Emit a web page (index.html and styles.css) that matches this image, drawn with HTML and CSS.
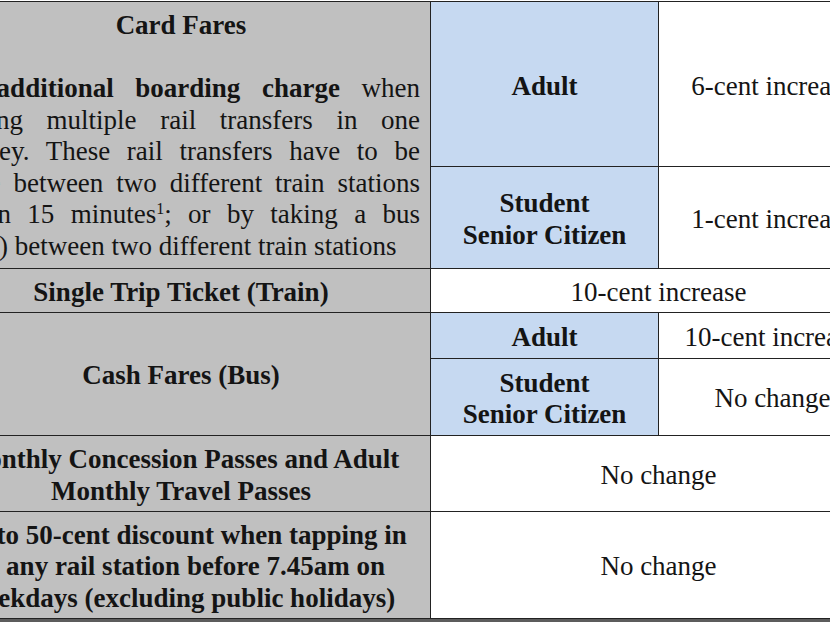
FILE: index.html
```html
<!DOCTYPE html>
<html lang="en">
<head>
<meta charset="utf-8">
<title>Fare changes</title>
<link rel="stylesheet" href="styles.css">
</head>
<body>
<div class="fares">
  <div class="cell head card">
    <div class="card-title">Card Fares</div>
    <div class="para">
      <span class="ln"><b>No additional boarding charge</b> when</span>
      <span class="ln">making multiple rail transfers in one</span>
      <span class="ln">journey. These rail transfers have to be</span>
      <span class="ln">made between two different train stations</span>
      <span class="ln">within 15 minutes<sup>1</sup>; or by taking a bus</span>
      <span class="ln last">trip(s) between two different train stations</span>
    </div>
  </div>
  <div class="cell grp r1">Adult</div>
  <div class="cell val r1">6-cent increase</div>
  <div class="cell grp r2">Student<br>Senior Citizen</div>
  <div class="cell val r2">1-cent increase</div>

  <div class="cell head">Single Trip Ticket (Train)</div>
  <div class="cell val span2">10-cent increase</div>

  <div class="cell head cash">Cash Fares (Bus)</div>
  <div class="cell grp">Adult</div>
  <div class="cell val">10-cent increase</div>
  <div class="cell grp">Student<br>Senior Citizen</div>
  <div class="cell val">No change</div>

  <div class="cell head">Monthly Concession Passes and Adult<br>Monthly Travel Passes</div>
  <div class="cell val span2">No change</div>

  <div class="cell head">Up to 50-cent discount when tapping in<br>at any rail station before 7.45am on<br>weekdays (excluding public holidays)</div>
  <div class="cell val span2">No change</div>
</div>
</body>
</html>
```

FILE: styles.css
```css
html, body {
  margin: 0;
  padding: 0;
  background: #ffffff;
  overflow: hidden;
}

body {
  width: 830px;
  height: 622px;
  font-family: "Liberation Serif", "Times New Roman", serif;
  font-size: 27px;
  line-height: 31.5px;
  color: #141414;
}

.fares {
  display: grid;
  grid-template-columns: 498px 227px 227px;
  grid-template-rows: 164px 101px 43px 45px 76px 75px 106px;
  gap: 1px;
  padding: 1px;
  margin: 1px 0 0 -69px;
  width: max-content;
  background: #222222;
  border-bottom: 3px solid #5c5c5c;
}

.cell {
  display: flex;
  align-items: center;
  justify-content: center;
  text-align: center;
  padding: 4px 0 0 0;
  box-sizing: border-box;
}

.head {
  background: #c0c0c0;
  font-weight: bold;
}

.grp {
  background: #c6d9f1;
  font-weight: bold;
}

.val {
  background: #ffffff;
}

.span2 {
  grid-column: 2 / 4;
}

.card {
  grid-row: 1 / 3;
  display: block;
  text-align: left;
  padding: 8px 10px 0 10px;
}

.cash {
  grid-row: 4 / 6;
}

.card-title {
  text-align: center;
  margin-bottom: 31.5px;
}

.para {
  font-weight: normal;
}

.ln {
  display: block;
  text-align: justify;
  text-align-last: justify;
}

.ln.last {
  text-align-last: left;
}

sup {
  font-size: 16px;
  line-height: 0;
  vertical-align: 9px;
}

.r1 {
  padding-top: 6px;
}
```
